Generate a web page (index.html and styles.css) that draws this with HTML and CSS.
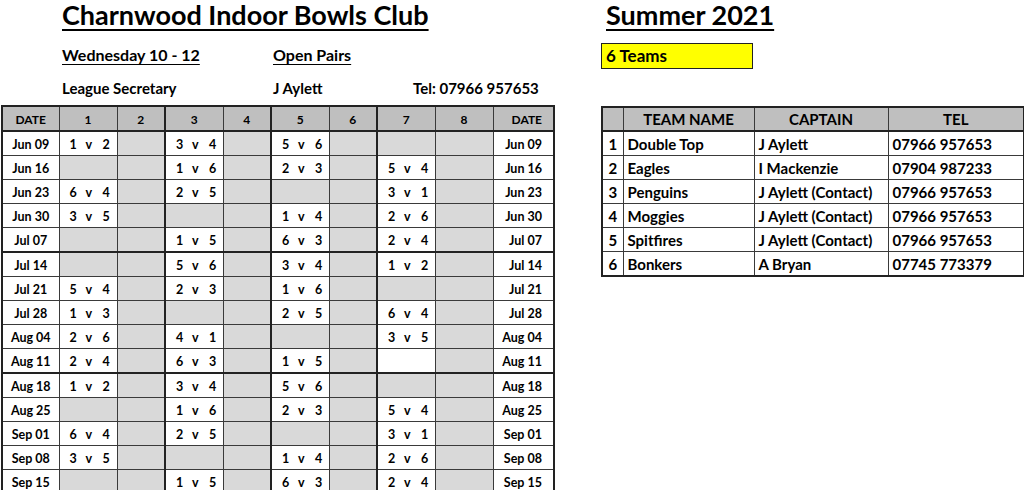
FILE: index.html
```html
<!DOCTYPE html>
<html>
<head>
<meta charset="utf-8">
<link rel="stylesheet" href="styles.css">
</head>
<body>
<div class="page">
  <section class="left">
    <div class="head">
      <h1 class="title">Charnwood Indoor Bowls Club</h1>
      <div class="sub">
        <span class="u">Wednesday 10 - 12</span>
        <span class="u">Open Pairs</span>
        <span></span>
      </div>
      <div class="info">
        <span>League Secretary</span>
        <span>J Aylett</span>
        <span>Tel: 07966 957653</span>
      </div>
    </div>
    <table class="fix">
      <colgroup>
        <col style="width:57px"><col style="width:58px"><col style="width:48px"><col style="width:58px"><col style="width:48px"><col style="width:58px"><col style="width:48px"><col style="width:58px"><col style="width:58px"><col style="width:61px">
      </colgroup>
      <thead>
        <tr><th class="d">DATE</th><th>1</th><th class="e">2</th><th class="k">3</th><th class="e">4</th><th class="k">5</th><th class="e">6</th><th class="k">7</th><th class="e">8</th><th class="d2">DATE</th></tr>
      </thead>
      <tbody id="rows"></tbody>
    </table>
  </section>
  <section class="right">
    <h1 class="title">Summer 2021</h1>
    <div class="teams">6 Teams</div>
    <table class="tt">
      <colgroup><col style="width:21px"><col style="width:131px"><col style="width:134px"><col style="width:136px"></colgroup>
      <thead><tr><th></th><th>TEAM NAME</th><th>CAPTAIN</th><th>TEL</th></tr></thead>
      <tbody>
        <tr><td class="n">1</td><td>Double Top</td><td>J Aylett</td><td>07966 957653</td></tr>
        <tr><td class="n">2</td><td>Eagles</td><td>I Mackenzie</td><td>07904 987233</td></tr>
        <tr><td class="n">3</td><td>Penguins</td><td>J Aylett (Contact)</td><td>07966 957653</td></tr>
        <tr><td class="n">4</td><td>Moggies</td><td>J Aylett (Contact)</td><td>07966 957653</td></tr>
        <tr><td class="n">5</td><td>Spitfires</td><td>J Aylett (Contact)</td><td>07966 957653</td></tr>
        <tr><td class="n">6</td><td>Bonkers</td><td>A Bryan</td><td>07745 773379</td></tr>
      </tbody>
    </table>
  </section>
</div>
<script src="script.js"></script>
</body>
</html>
```
FILE: script.js
```js
var data = [
  ["Jun 09","1v2","3v4","5v6",""],
  ["Jun 16","","1v6","2v3","5v4"],
  ["Jun 23","6v4","2v5","","3v1"],
  ["Jun 30","3v5","","1v4","2v6"],
  ["Jul 07","","1v5","6v3","2v4"],
  ["Jul 14","","5v6","3v4","1v2"],
  ["Jul 21","5v4","2v3","1v6",""],
  ["Jul 28","1v3","","2v5","6v4"],
  ["Aug 04","2v6","4v1","","3v5"],
  ["Aug 11","2v4","6v3","1v5","W"],
  ["Aug 18","1v2","3v4","5v6",""],
  ["Aug 25","","1v6","2v3","5v4"],
  ["Sep 01","6v4","2v5","","3v1"],
  ["Sep 08","3v5","","1v4","2v6"],
  ["Sep 15","","1v5","6v3","2v4"]
];
var body = document.getElementById("rows");
data.forEach(function (r, i) {
  var tr = document.createElement("tr");
  if (i === 4 || i === 9) tr.className = "sep";
  var h = '<td class="d">' + r[0] + '</td>';
  for (var c = 1; c <= 4; c++) {
    var v = r[c];
    var cls = c > 1 ? "k " : "";
    if (v === "W") {
      h += '<td class="' + cls + 'm"></td>';
    } else if (v) {
      h += '<td class="' + cls + 'm"><span class="a">' + v[0] + '</span><span class="v">v</span><span>' + v[2] + '</span></td>';
    } else {
      h += '<td class="' + cls + 'g"></td>';
    }
    h += '<td class="e g"></td>';
  }
  h += '<td class="d2">' + r[0] + '</td>';
  tr.innerHTML = h;
  body.appendChild(tr);
});
```
FILE: styles.css
```css
html, body {
  margin: 0;
  padding: 0;
  background: #fff;
}
body {
  font-family: "Lato", "Liberation Sans", sans-serif;
  color: #000;
  width: 1024px;
  height: 490px;
  overflow: hidden;
}
.page {
  display: flex;
  align-items: flex-start;
}
.left {
  width: 553px;
  padding-left: 1px;
}
.right {
  margin-left: 47px;
  width: 423px;
}
.title {
  margin: 0;
  font-size: 27px;
  font-weight: 700;
  line-height: 30px;
  height: 30px;
  text-decoration: underline;
  text-decoration-thickness: 2px;
  text-underline-offset: 4px;
}
.head {
  padding-left: 61px;
}
.sub, .info {
  display: grid;
  grid-template-columns: 211px 140px auto;
  font-weight: 700;
}
.sub {
  margin-top: 14px;
  font-size: 16px;
  line-height: 22px;
}
.u {
  text-decoration: underline;
  text-decoration-thickness: 1px;
  text-underline-offset: 3px;
  justify-self: start;
}
.info {
  margin-top: 12px;
  font-size: 15px;
  line-height: 20px;
  height: 27px;
}
.right .title {
  padding-left: 5px;
}
.teams {
  margin-top: 13px;
  height: 24px;
  background: #ffff00;
  border: 1px solid #222;
  font-weight: 700;
  font-size: 17px;
  line-height: 24px;
  padding-left: 4px;
  width: 146px;
}
table {
  border-collapse: collapse;
  table-layout: fixed;
}
.fix {
  width: 552px;
  font-size: 12.5px;
  font-weight: 700;
}
.fix th, .fix td {
  border: 1px solid #3a3a3a;
  padding: 3px 0 0 0;
  height: 20px;
  line-height: 20px;
  white-space: nowrap;
  overflow: hidden;
}
.fix th {
  background: #bfbfbf;
  height: 19px;
  border-top: 2px solid #222;
  border-bottom: 2px solid #222;
  text-align: center;
  font-size: 12px;
}
.fix .d {
  text-align: center;
}
.fix .d2 {
  text-align: right;
  padding-right: 11px;
}
.fix .k {
  border-left: 2px solid #222;
}
.fix .e {
  border-left: 1px solid #8a8a8a;
}
.fix .g {
  background: #d9d9d9;
}
.fix .m {
  padding-left: 10px;
}
.fix .m span {
  display: inline-block;
}
.fix .m .a {
  width: 16px;
}
.fix .m .v {
  width: 17px;
}
.fix tr.sep td {
  border-bottom: 2px solid #222;
}
.fix tbody tr:last-child td {
  border-bottom: 2px solid #222;
}
.fix .d2, .fix th.d2 {
  border-right: 2px solid #222;
}
.fix .d, .fix th.d {
  border-left: 2px solid #222;
}
.tt {
  width: 422px;
  margin-top: 37px;
  font-size: 15px;
  font-weight: 700;
}
.tt th, .tt td {
  border: 1px solid #3a3a3a;
  padding: 1px 0 0 4px;
  height: 22px;
  line-height: 22px;
  white-space: nowrap;
  overflow: hidden;
}
.tt th {
  background: #bfbfbf;
  text-align: center;
  height: 21px;
  border-top: 2px solid #222;
  border-bottom: 2px solid #222;
  padding: 0;
}
.tt td.n {
  text-align: center;
  padding: 1px 0 0 0;
}
.tt tr > :first-child {
  border-left: 2px solid #222;
}
.tt tr > :last-child {
  border-right: 2px solid #222;
}
.tt tbody tr:last-child td {
  border-bottom: 2px solid #222;
}
```
